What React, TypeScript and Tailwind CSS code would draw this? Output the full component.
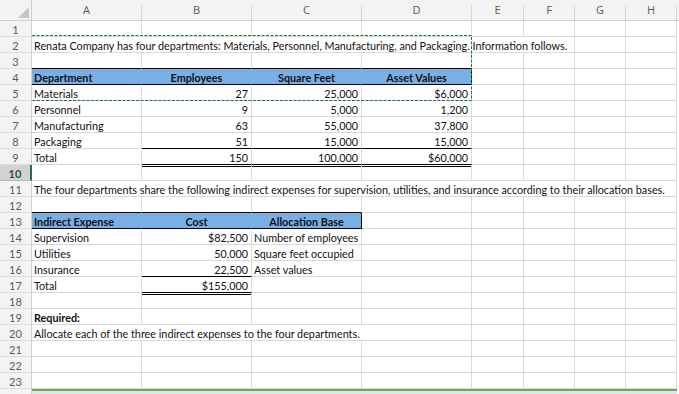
import type { ReactNode } from 'react';

// column template: row header, A..H (widths include the right grid line)
const GRID = 'grid grid-cols-[32px_110px_110px_110px_110px_52px_51px_51px_51px]';

const SPAN: Record<number, string> = {
  1: '',
  3: 'col-span-3',
  4: 'col-span-4',
  6: 'col-span-6',
  8: 'col-span-8',
};

interface CellDef {
  span?: number;
  content?: ReactNode;
  /** extra classes: alignment, fill, borders */
  className?: string;
  /** draws the second stroke of a double underline sitting in the cell above */
  double?: boolean;
}

const BLUE = 'bg-[#7aafe3] border-r-[#7aafe3]';

function Cell({ span = 1, content, className = '', double }: CellDef) {
  return (
    <div
      className={`relative flex h-4 items-end overflow-hidden whitespace-nowrap border-r border-b border-[#d9d9d9] px-[2px] text-[10.8px] leading-[12px] text-[#111] ${SPAN[span]} ${className}`}
    >
      {double && <div className="absolute top-px right-0 left-0 h-px bg-black" />}
      {content}
    </div>
  );
}

function Row({
  num,
  cells,
  selected,
}: {
  num: number;
  cells: CellDef[];
  selected?: boolean;
}) {
  // pad out to 8 data columns
  const used = cells.reduce((s, c) => s + (c.span ?? 1), 0);
  const filler: CellDef[] = Array.from({ length: Math.max(0, 8 - used) }, () => ({}));
  return (
    <div className={GRID}>
      <div
        className={
          selected
            ? 'flex h-4 items-end justify-center border-r-2 border-b border-r-[#217346] border-b-[#b9b9b9] bg-[#d2d2d2] text-[11px] leading-[12px] font-bold text-[#1f5c38]'
            : 'flex h-4 items-end justify-center border-r border-b border-r-[#cfcfcf] border-b-[#dcdcdc] bg-[#f3f3f3] text-[11px] leading-[12px] text-[#5a5a5a]'
        }
      >
        {num}
      </div>
      {[...cells, ...filler].map((c, i) => (
        <Cell key={i} {...c} />
      ))}
    </div>
  );
}

const r = 'justify-end pr-[3px]';
const c = 'justify-center';
const b = 'font-bold';

export default function App() {
  const letters = ['A', 'B', 'C', 'D', 'E', 'F', 'G', 'H'];

  return (
    <div className="relative h-[394px] w-[679px] overflow-hidden bg-white font-['Lato','Liberation_Sans',sans-serif]">
      {/* column headers */}
      <div className={`${GRID} h-[21px] border-b border-[#cfcfcf] bg-[#f3f3f3]`}>
        <div className="flex items-end justify-end border-r border-[#cfcfcf] pr-[2px] pb-[2px]">
          <svg width="11" height="11" viewBox="0 0 11 11">
            <polygon points="11,0 11,11 0,11" fill="#c6c6c6" />
          </svg>
        </div>
        {letters.map((l) => (
          <div key={l} className="flex">
            <div className="flex flex-1 items-center justify-center pt-px font-['Open_Sans',sans-serif] text-[11px] text-[#5b5b5b]">
              {l}
            </div>
            <div className="mt-[5px] w-px bg-[#d6d6d6]" />
          </div>
        ))}
      </div>

      <Row num={1} cells={[]} />
      <Row
        num={2}
        cells={[
          {
            span: 6,
            content:
              'Renata Company has four departments: Materials, Personnel, Manufacturing, and Packaging. Information follows.',
          },
        ]}
      />
      <Row
        num={3}
        cells={[
          { className: 'border-b-black' },
          { className: 'border-b-black' },
          { className: 'border-b-black' },
          { className: 'border-b-black' },
        ]}
      />
      <Row
        num={4}
        cells={[
          { content: 'Department', className: `${b} ${BLUE} border-b-black` },
          { content: 'Employees', className: `${b} ${c} ${BLUE} border-b-black` },
          { content: 'Square Feet', className: `${b} ${c} ${BLUE} border-b-black` },
          { content: 'Asset Values', className: `${b} ${c} bg-[#7aafe3] border-b-black border-r-black` },
        ]}
      />
      <Row
        num={5}
        cells={[
          { content: 'Materials' },
          { content: '27', className: r },
          { content: '25,000', className: r },
          { content: '$6,000', className: r },
        ]}
      />
      <Row
        num={6}
        cells={[
          { content: 'Personnel' },
          { content: '9', className: r },
          { content: '5,000', className: r },
          { content: '1,200', className: r },
        ]}
      />
      <Row
        num={7}
        cells={[
          { content: 'Manufacturing' },
          { content: '63', className: r },
          { content: '55,000', className: r },
          { content: '37,800', className: r },
        ]}
      />
      <Row
        num={8}
        cells={[
          { content: 'Packaging' },
          { content: '51', className: `${r} border-b-black` },
          { content: '15,000', className: `${r} border-b-black` },
          { content: '15,000', className: `${r} border-b-black` },
        ]}
      />
      <Row
        num={9}
        cells={[
          { content: 'Total' },
          { content: '150', className: `${r} border-b-black` },
          { content: '100,000', className: `${r} border-b-black` },
          { content: '$60,000', className: `${r} border-b-black` },
        ]}
      />
      <Row num={10} selected cells={[{}, { double: true }, { double: true }, { double: true }]} />
      <Row
        num={11}
        cells={[
          {
            span: 8,
            content:
              'The four departments share the following indirect expenses for supervision, utilities, and insurance according to their allocation bases.',
          },
        ]}
      />
      <Row
        num={12}
        cells={[
          { className: 'border-b-black' },
          { className: 'border-b-black' },
          { className: 'border-b-black' },
        ]}
      />
      <Row
        num={13}
        cells={[
          { content: 'Indirect Expense', className: `${b} ${BLUE} border-b-black` },
          { content: 'Cost', className: `${b} ${c} ${BLUE} border-b-black` },
          { content: 'Allocation Base', className: `${b} ${c} bg-[#7aafe3] border-b-black border-r-black` },
        ]}
      />
      <Row
        num={14}
        cells={[
          { content: 'Supervision' },
          { content: '$82,500', className: r },
          { content: 'Number of employees' },
        ]}
      />
      <Row
        num={15}
        cells={[
          { content: 'Utilities' },
          { content: '50,000', className: r },
          { content: 'Square feet occupied' },
        ]}
      />
      <Row
        num={16}
        cells={[
          { content: 'Insurance' },
          { content: '22,500', className: `${r} border-b-black` },
          { content: 'Asset values' },
        ]}
      />
      <Row
        num={17}
        cells={[{ content: 'Total' }, { content: '$155,000', className: `${r} border-b-black` }]}
      />
      <Row num={18} cells={[{}, { double: true }]} />
      <Row num={19} cells={[{ content: 'Required:', className: b }]} />
      <Row
        num={20}
        cells={[
          {
            span: 4,
            content: 'Allocate each of the three indirect expenses to the four departments.',
          },
        ]}
      />
      <Row num={21} cells={[]} />
      <Row num={22} cells={[]} />
      <Row num={23} cells={[]} />
      <div className={GRID}>
        <div className="flex h-4 items-start justify-center border-r border-[#cfcfcf] bg-[#f3f3f3] pt-[3px] text-[11px] leading-[12px] text-[#5a5a5a]">
          24
        </div>
        <div className="col-span-8 h-4 overflow-hidden border-t-2 border-[#70ad47] bg-[#dce3f1] px-[2px] pt-[3px] whitespace-nowrap text-[10.8px] leading-[12px] text-[#111]">
          <span className="font-bold">Analysis:</span> The separate departments each bear their share of indirect expenses based on the allocation bases above.
        </div>
      </div>

      {/* copy marquee around A2:D5 (left edge sits under the row headers) */}
      <svg className="pointer-events-none absolute top-[35px] left-[32px]" width="441" height="67">
        <path
          d="M0 0.5 H439.5 V65.5 H0"
          fill="none"
          stroke="#217346"
          strokeWidth="1"
          strokeDasharray="3 1.5"
        />
      </svg>
    </div>
  );
}
